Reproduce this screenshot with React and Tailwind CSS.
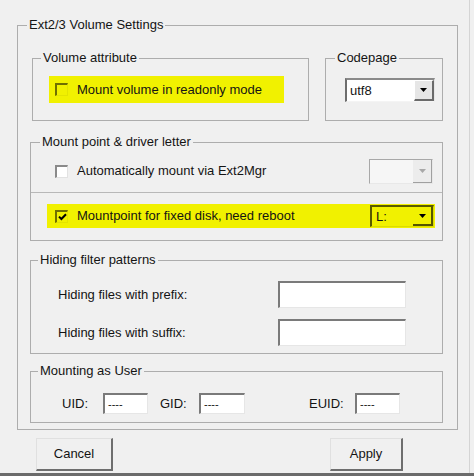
import React from "react";

function Tri({ color = "#000" }) {
  return (
    <svg width="7" height="4" viewBox="0 0 7 4">
      <path d="M0 0H7L3.5 4Z" fill={color} />
    </svg>
  );
}

function CheckBox({ hl = false, checked = false }) {
  return (
    <div
      className={
        hl
          ? "w-[13px] h-[13px] shrink-0 border-t-2 border-l-2 border-r border-b border-t-[#6f6f00] border-l-[#6f6f00] border-r-[#e4e400] border-b-[#e4e400] bg-[#f1f100] flex items-center justify-center"
          : "w-[13px] h-[13px] shrink-0 border-t-2 border-l-2 border-r border-b border-t-[#8a8a8a] border-l-[#8a8a8a] border-r-[#e2e2e2] border-b-[#e2e2e2] bg-white flex items-center justify-center"
      }
    >
      {checked && (
        <svg width="9" height="8" viewBox="0 0 9 8">
          <path d="M1 3.6L3.4 6L8 1.2" stroke="#000" strokeWidth="2" fill="none" />
        </svg>
      )}
    </div>
  );
}

function TextBox({ w, h, children }) {
  return (
    <div
      className="shrink-0 bg-white border-t-2 border-l-2 border-r border-b border-t-[#7a7a7a] border-l-[#7a7a7a] border-r-[#e6e6e6] border-b-[#e6e6e6] flex items-center pl-[3px] text-[11px] leading-none"
      style={{ width: w, height: h }}
    >
      {children}
    </div>
  );
}

export default function App() {
  return (
    <div className="w-[474px] h-[476px] bg-[#f0f0f0] border-b-[3px] border-[#6b6b6b] font-['Liberation_Sans',Arial,sans-serif] text-[13px] text-[#141414] overflow-hidden">
      <div className="w-[470px] h-full border-r border-[#d4d4d4] pt-[17px] pl-[17px]">
        <fieldset className="w-[441px] h-[413px] border border-[#adadad]">
          <legend className="ml-[9px] px-[2px] leading-[16px]">Ext2/3 Volume Settings</legend>

          <div className="flex mt-[17px] ml-[14px] gap-[16px]">
            <fieldset className="w-[277px] h-[71px] border border-[#adadad]">
              <legend className="ml-[8px] px-[2px] leading-[16px]">Volume attribute</legend>
              <div className="mt-[10px] ml-[16px] w-[235px] h-[27px] bg-[#f1f100] flex items-center pl-[6px]">
                <CheckBox hl />
                <span className="ml-[9px]">Mount volume in readonly mode</span>
              </div>
            </fieldset>
            <fieldset className="w-[118px] h-[71px] border border-[#adadad]">
              <legend className="ml-[9px] px-[2px] leading-[16px]">Codepage</legend>
              <div className="mt-[12px] ml-[19px] w-[90px] h-[24px] bg-white border-t-2 border-l-2 border-r border-b border-t-[#8a8a8a] border-l-[#6e6e6e] border-r-[#e6e6e6] border-b-[#f4f4f4] flex items-center">
                <span className="pl-[3px] flex-1">utf8</span>
                <div className="w-[20px] h-full bg-[#e6e6e6] border-t border-l border-r-2 border-b-2 border-t-white border-l-white border-r-[#6a6a6a] border-b-[#6a6a6a] flex items-center justify-center">
                  <Tri />
                </div>
              </div>
            </fieldset>
          </div>

          <fieldset className="mt-[13px] ml-[12px] w-[413px] h-[107px] border border-[#adadad]">
            <legend className="ml-[9px] px-[2px] leading-[16px]">Mount point &amp; driver letter</legend>
            <div className="h-[42px] flex items-center pl-[24px] pr-[9px]">
              <CheckBox />
              <span className="ml-[9px]">Automatically mount via Ext2Mgr</span>
              <div className="ml-auto w-[64px] h-[25px] bg-[#f6f6f6] border-t border-l border-r border-b border-t-[#a8a8a8] border-l-[#a8a8a8] border-r-[#e8e8e8] border-b-[#e8e8e8] flex justify-end">
                <div className="w-[19px] h-full bg-[#ececec] border-r border-b border-r-[#a0a0a0] border-b-[#a0a0a0] flex items-center justify-center">
                  <Tri color="#a8a8a8" />
                </div>
              </div>
            </div>
            <div className="h-px bg-[#b8b8b8]" />
            <div className="mt-[11px] ml-[16px] w-[388px] h-[24px] bg-[#f1f100] flex items-center pl-[8px] pr-[1px]">
              <CheckBox hl checked />
              <span className="ml-[9px]">Mountpoint for fixed disk, need reboot</span>
              <div className="ml-auto w-[64px] h-[22px] border-t-2 border-l-2 border-r border-b border-t-[#5a5a00] border-l-[#5a5a00] border-r-[#dcdc00] border-b-[#dcdc00] flex items-center">
                <span className="pl-[4px] flex-1">L:</span>
                <div className="w-[20px] h-full border-r-2 border-b-2 border-r-[#555500] border-b-[#555500] flex items-center justify-center">
                  <Tri />
                </div>
              </div>
            </div>
          </fieldset>

          <fieldset className="mt-[11px] ml-[12px] w-[413px] h-[102px] border border-[#adadad]">
            <legend className="ml-[7px] px-[2px] leading-[16px]">Hiding filter patterns</legend>
            <div className="mt-[13px] flex items-center pl-[27px]">
              <span className="w-[220px]">Hiding files with prefix:</span>
              <TextBox w={128} h={27} />
            </div>
            <div className="mt-[11px] flex items-center pl-[27px]">
              <span className="w-[220px]">Hiding files with suffix:</span>
              <TextBox w={128} h={27} />
            </div>
          </fieldset>

          <fieldset className="mt-[9px] ml-[12px] w-[413px] h-[60px] border border-[#adadad]">
            <legend className="ml-[7px] px-[2px] leading-[16px]">Mounting as User</legend>
            <div className="mt-[14px] flex items-center pl-[31px]">
              <span className="w-[41px]">UID:</span>
              <TextBox w={45} h={21}>----</TextBox>
              <span className="ml-[12px] w-[39px]">GID:</span>
              <TextBox w={46} h={21}>----</TextBox>
              <span className="ml-[64px] w-[46px]">EUID:</span>
              <TextBox w={45} h={21}>----</TextBox>
            </div>
          </fieldset>
        </fieldset>

        <div className="flex mt-[8px]">
          <button className="ml-[19px] w-[77px] h-[33px] bg-[#f0f0f0] border-t border-l border-r-2 border-b-2 border-t-[#e0e0e0] border-l-[#e0e0e0] border-r-[#6e6e6e] border-b-[#6e6e6e] flex items-center justify-center">
            Cancel
          </button>
          <button className="ml-[217px] w-[73px] h-[33px] bg-[#f0f0f0] border-t border-l border-r-2 border-b-2 border-t-[#e0e0e0] border-l-[#e0e0e0] border-r-[#6e6e6e] border-b-[#6e6e6e] flex items-center justify-center">
            Apply
          </button>
        </div>
      </div>
    </div>
  );
}
